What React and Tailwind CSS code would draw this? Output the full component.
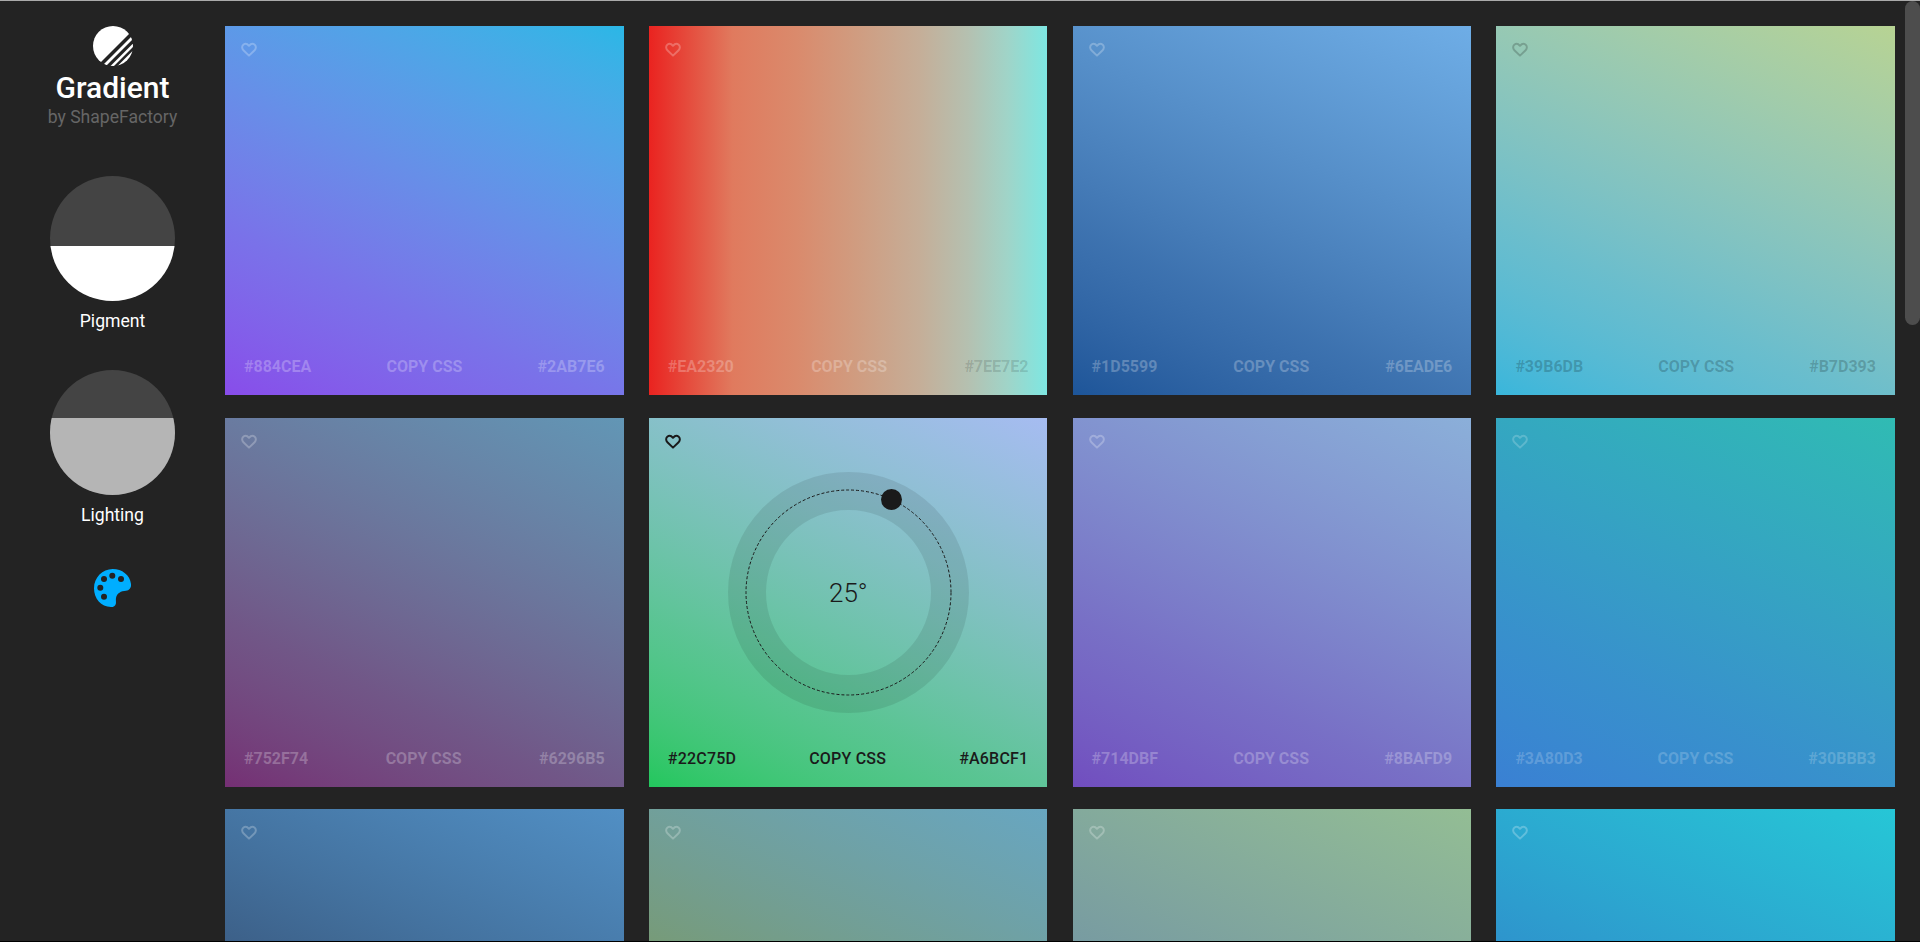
import React from 'react';

const cards = [
  { from: '#884CEA', to: '#2AB7E6', bg: 'bg-[linear-gradient(25deg_in_srgb-linear,#884CEA,56%,#2AB7E6)]', tone: 'text-white/25' },
  { from: '#EA2320', to: '#7EE7E2', bg: 'bg-[linear-gradient(90deg,#EA2320,#E07A5E_21%,#DA8A6C_37%,#D09C80_52%,#C5AE98_68%,#B5C0B0_80%,#A0D4C8_90%,#7EE7E2)]', tone: 'text-white/25', lastTone: 'text-black/15' },
  { from: '#1D5599', to: '#6EADE6', bg: 'bg-[linear-gradient(25deg_in_srgb-linear,#1D5599,56%,#6EADE6)]', tone: 'text-white/25' },
  { from: '#39B6DB', to: '#B7D393', bg: 'bg-[linear-gradient(25deg_in_srgb-linear,#39B6DB,56%,#B7D393)]', tone: 'text-black/20' },
  { from: '#752F74', to: '#6296B5', bg: 'bg-[linear-gradient(25deg_in_srgb-linear,#752F74,56%,#6296B5)]', tone: 'text-white/25' },
  { from: '#22C75D', to: '#A6BCF1', bg: 'bg-[linear-gradient(25deg_in_srgb-linear,#22C75D,56%,#A6BCF1)]', tone: 'text-[#1a1a1a]', active: true },
  { from: '#714DBF', to: '#8BAFD9', bg: 'bg-[linear-gradient(25deg_in_srgb-linear,#714DBF,56%,#8BAFD9)]', tone: 'text-white/25' },
  { from: '#3A80D3', to: '#30BBB3', bg: 'bg-[linear-gradient(25deg_in_srgb-linear,#3A80D3,56%,#30BBB3)]', tone: 'text-white/20' },
  { from: '#2C2F4E', to: '#518FC4', bg: 'bg-[linear-gradient(25deg_in_srgb-linear,#2C2F4E,56%,#518FC4)]', tone: 'text-white/25' },
  { from: '#7E9400', to: '#68A6C0', bg: 'bg-[linear-gradient(25deg_in_srgb-linear,#7E9400,56%,#68A6C0)]', tone: 'text-white/25' },
  { from: '#6483A8', to: '#93BD94', bg: 'bg-[linear-gradient(25deg_in_srgb-linear,#6483A8,56%,#93BD94)]', tone: 'text-white/25' },
  { from: '#326BC7', to: '#26C6D6', bg: 'bg-[linear-gradient(25deg_in_srgb-linear,#326BC7,56%,#26C6D6)]', tone: 'text-white/25' },
];

const Heart = ({ className }) => (
  <svg viewBox="0 0 16 15" width="16" height="15" fill="none" stroke="currentColor" strokeWidth="2" strokeLinejoin="round" className={className}>
    <path d="M8 13.6 2.4 8.2C.7 6.5.8 4 2.3 2.7 3.9 1.4 6.2 1.6 8 3.8c1.8-2.2 4.1-2.4 5.7-1.1 1.5 1.3 1.6 3.8-.1 5.5L8 13.6Z" />
  </svg>
);

const Logo = () => (
  <svg viewBox="0 0 40 40" width="40" height="40">
    <defs>
      <clipPath id="logo-clip"><circle cx="20" cy="20" r="20" /></clipPath>
    </defs>
    <g clipPath="url(#logo-clip)" fill="#fff">
      <path d="M0 0h44L0 44Z" />
      <path d="M49 0h4L0 53v-4Z" />
      <path d="M57.500 0H61L0 61v-3.500Z" />
      <path d="M64.500 0H70L0 70v-5.500Z" />
    </g>
  </svg>
);

const Palette = ({ className }) => (
  <svg viewBox="0 0 38 38" width="38" height="38" className={className}>
    <path d="M18.700 0C28 0 36 6 37 15c.5 4-2 6.500-5 6.700-5 .3-9 2.300-10 7.300-.5 3 1 6-1.500 8-1 1-2.500 1-3.500 1C7 38 0 29.500 0 19.300 0 8.500 8.500 0 18.700 0Z" fill="#00aeff" />
    <circle cx="10" cy="10" r="3" fill="#232323" />
    <circle cx="18.300" cy="6.700" r="3" fill="#232323" />
    <circle cx="27" cy="10" r="3" fill="#232323" />
    <circle cx="6.300" cy="18.700" r="3" fill="#232323" />
    <circle cx="10" cy="27.700" r="3" fill="#232323" />
  </svg>
);

const Swatch = ({ split, fill, label }) => (
  <div className="flex flex-col items-center">
    <div className="w-[125px] h-[125px] rounded-full overflow-hidden bg-[#444444] flex flex-col justify-end">
      <div className={`${split} ${fill}`} />
    </div>
    <div className="mt-[10px] text-[17.6px] leading-[21px] text-white">{label}</div>
  </div>
);

const Dial = () => (
  <div className="absolute left-[79px] top-[54px] w-[241px] h-[241px] flex items-center justify-center">
    <svg viewBox="0 0 241 241" width="241" height="241" className="absolute inset-0">
      <circle cx="120.5" cy="120.5" r="101.5" fill="none" stroke="#000" strokeOpacity="0.09" strokeWidth="38" />
      <circle cx="120.5" cy="120.5" r="102.5" fill="none" stroke="#1a1a1a" strokeWidth="1" strokeDasharray="3 2" />
      <circle cx="163.5" cy="27.5" r="10.5" fill="#1a1a1a" />
    </svg>
    <span className="relative pt-[2px] text-[26px] font-light text-[#1a1a1a]">25°</span>
  </div>
);

const Card = ({ card }) => (
  <div className={`relative h-[369px] ${card.bg} ${card.tone}`}>
    <Heart className="absolute left-[16px] top-[16px]" />
    {card.active && <Dial />}
    <div className={`absolute left-[19px] right-[19px] bottom-[18px] flex justify-between text-base leading-5 ${card.active ? 'font-medium tracking-[0.2px]' : 'font-bold'}`}>
      <span>{card.from}</span>
      <span>COPY CSS</span>
      <span className={card.lastTone}>{card.to}</span>
    </div>
  </div>
);

export default function App() {
  return (
    <div className="h-[942px] overflow-hidden flex bg-[#232323] border-t border-b border-t-[#aaaaaa] border-b-black font-['Roboto',sans-serif]">
      <aside className="w-[225px] shrink-0 flex flex-col items-center pt-[25px]">
        <Logo />
        <div className="mt-[3px] text-[30px] leading-[37px] font-medium text-white">Gradient</div>
        <div className="mt-[1px] text-[17.6px] leading-[21px] text-[#666666]">by ShapeFactory</div>
        <div className="mt-[48px]">
          <Swatch split="h-[55px]" fill="bg-white" label="Pigment" />
        </div>
        <div className="mt-[38px]">
          <Swatch split="h-[77px]" fill="bg-[#b5b5b5]" label="Lighting" />
        </div>
        <Palette className="mt-[43px]" />
      </aside>
      <main className="w-[1670px] shrink-0 pt-[25px] grid grid-cols-4 gap-x-[25.2px] gap-y-[22.6px] content-start">
        {cards.map((card) => (
          <Card key={card.from} card={card} />
        ))}
      </main>
      <div className="ml-[10px] w-[15px] shrink-0">
        <div className="h-[324px] rounded-full bg-[#4d4d4d]" />
      </div>
    </div>
  );
}
